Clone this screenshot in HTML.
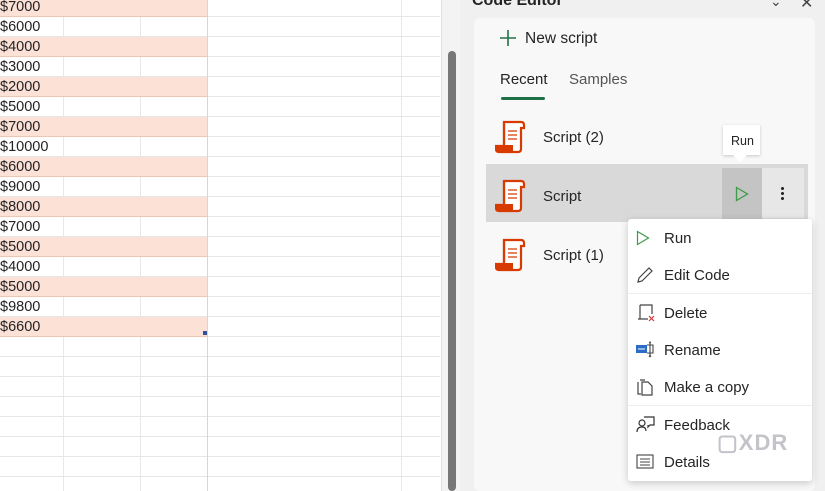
<!DOCTYPE html><html style="overflow:hidden;height:491px"><head><style>
body{margin:0;width:825px;height:491px;overflow:hidden;background:#fff;font-family:"Liberation Sans",sans-serif;position:relative}
.r{position:absolute;left:0;width:440px;height:20px;border-bottom:1px solid #e6e6e6;box-sizing:border-box}
.r span{position:absolute;left:0;top:2px;font-size:14.5px;color:#222;z-index:3}
.pk{position:absolute;left:0;top:0;width:207px;height:19px;background:#fbe1d6;z-index:2;border-bottom:1px solid #ecc7b6}
.v{position:absolute;top:0;height:491px;width:1px;background:#e8e8e8;z-index:1}
.abs{position:absolute}
.t{font-size:15px;color:#242424;position:absolute}
.mi{position:absolute;left:664px;font-size:15px;color:#242424}
</style></head><body>
<div id="grid"></div>
<script>
let g=document.getElementById('grid');let vals=["$7000","$6000","$4000","$3000","$2000","$5000","$7000","$10000","$6000","$9000","$8000","$7000","$5000","$4000","$5000","$9800","$6600"];
for(let i=0;i<25;i++){let d=document.createElement('div');d.className='r';d.style.top=(-3+20*i)+'px';if(i<17){d.innerHTML='<span>'+vals[i]+'</span>';if(i%2==0){d.innerHTML+='<div class="pk"></div>';}}g.appendChild(d);}
</script>
<div class="v" style="left:63px"></div><div class="v" style="left:140px"></div><div class="v" style="left:207px;background:#d6d6d6"></div><div class="v" style="left:401px"></div>
<div class="abs" style="left:203px;top:331px;width:4px;height:4px;background:#3050a0;z-index:4"></div>
<div class="abs" style="left:441px;top:0;width:19px;height:491px;background:#f3f3f3;border-left:1px solid #e0e0e0;z-index:5"></div>
<div class="abs" style="left:448px;top:51px;width:8px;height:440px;background:#777;border-radius:4px;z-index:6"></div>
<div class="abs" style="left:460px;top:0;width:365px;height:491px;background:#f0f0f0;z-index:5"></div>
<div style="position:absolute;left:0;top:0;width:825px;height:491px;z-index:7">
<div class="abs" style="left:474px;top:18px;width:341px;height:473px;background:#f8f8f8;border-radius:6px"></div>
<div class="t" style="left:472px;top:-8px;font-size:16px;font-weight:bold">Code Editor</div>
<div class="t" style="left:800px;top:-7px;font-size:16px;color:#444">✕</div>
<div class="t" style="left:770px;top:-7px;font-size:14px;color:#444">⌄</div>
<svg class="abs" style="left:499px;top:29px" width="18" height="18"><path d="M9 1V17M1 9H17" stroke="#217346" stroke-width="1.6"/></svg>
<div class="t" style="left:525px;top:30px;font-size:15.5px">New script</div>
<div class="t" style="left:500px;top:71px;font-size:15px">Recent</div>
<div class="abs" style="left:501px;top:97px;width:44px;height:3px;background:#1e7145;border-radius:2px"></div>
<div class="t" style="left:569px;top:71px;font-size:15px;color:#555">Samples</div>
<div class="abs" style="left:486px;top:164px;width:322px;height:58px;background:#d9d9d9"></div>
<div class="abs" style="left:722px;top:168px;width:40px;height:54px;background:#c4c4c4"></div>
<div class="abs" style="left:762px;top:168px;width:42px;height:50px;background:#e7e7e7"></div>
<svg class="abs" style="left:735px;top:186px" width="14" height="16"><path d="M1.5 1.5L12.5 8L1.5 14.5Z" fill="none" stroke="#3d9b48" stroke-width="1.3"/></svg>
<div class="abs" style="left:781px;top:187px;width:3px;height:3px;background:#222;border-radius:50%;box-shadow:0 5px 0 #222,0 10px 0 #222"></div>
<div class="abs" style="left:723px;top:125px;width:37px;height:30px;background:#fff;box-shadow:0 1px 3px rgba(0,0,0,.2)"></div>
<div class="abs" style="left:735px;top:150px;width:10px;height:10px;background:#fff;transform:rotate(45deg)"></div>
<div class="abs" style="left:723px;top:130px;width:37px;height:20px;background:#fff"></div>
<div class="t" style="left:731px;top:134px;font-size:12.5px">Run</div>
<script>
[[120,'Script (2)'],[179,'Script'],[238,'Script (1)']].forEach(([y,n])=>{document.write('<svg class="abs" style="left:495px;top:'+y+'px" width="32" height="34"><path d="M9 2H26Q29 2 29 5V8H26V29Q26 32 23 32H4Q1 32 1 29V26H9Z" fill="#fff" stroke="#d83b01" stroke-width="2.2"/><path d="M9 2V26" stroke="#d83b01" stroke-width="2.2"/><path d="M1 25H18V32H4Q1 32 1 29Z" fill="#d83b01"/><path d="M13 11H22M13 15H22M13 19H22" stroke="#d83b01" stroke-width="1.3"/></svg><div class="t" style="left:543px;top:'+(y+9)+'px">'+n+'</div>');});
</script>
<div class="abs" style="left:628px;top:219px;width:184px;height:262px;background:#fff;box-shadow:0 2px 8px rgba(0,0,0,.2);border-radius:3px"></div>
<div class="abs" style="left:628px;top:293px;width:184px;height:1px;background:#eee"></div>
<div class="abs" style="left:628px;top:405px;width:184px;height:1px;background:#eee"></div>
<svg class="abs" style="left:636px;top:230px" width="14" height="16"><path d="M1.5 1.5L12.5 8L1.5 14.5Z" fill="none" stroke="#3d9b48" stroke-width="1.2"/></svg>
<div class="mi" style="top:230px">Run</div>
<svg class="abs" style="left:636px;top:266px" width="18" height="18"><path d="M2 16L3 12L13 2L16 5L6 15Z" fill="none" stroke="#444" stroke-width="1.2"/></svg>
<div class="mi" style="top:267px">Edit Code</div>
<svg class="abs" style="left:636px;top:303px" width="20" height="20"><path d="M4 2H16V11M4 2V16H12M2 16H12" fill="none" stroke="#444" stroke-width="1.2"/><path d="M13 13L18 18M18 13L13 18" stroke="#d13438" stroke-width="1.2"/></svg>
<div class="mi" style="top:305px">Delete</div>
<svg class="abs" style="left:635px;top:340px" width="20" height="20"><rect x="1" y="5" width="11" height="8" fill="#2b6cc4"/><path d="M12 5H18V13H12M14 2Q15 2 15 4V14Q15 16 14 17M16 2Q15 2 15 4M16 17Q15 16 15 14" fill="none" stroke="#444" stroke-width="1.1"/><path d="M3 9H10" stroke="#fff"/></svg>
<div class="mi" style="top:342px">Rename</div>
<svg class="abs" style="left:636px;top:377px" width="20" height="20"><path d="M4 3H9M2 5V17H5" fill="none" stroke="#444" stroke-width="1.2"/><path d="M6 5H12L16 9V18H6Z" fill="none" stroke="#444" stroke-width="1.2"/></svg>
<div class="mi" style="top:379px">Make a copy</div>
<svg class="abs" style="left:636px;top:415px" width="20" height="20"><circle cx="6" cy="8" r="3" fill="none" stroke="#333" stroke-width="1.2"/><path d="M1 17Q1 12 6 12Q10 12 10 16M8 2H18V10H14L12 12V10" fill="none" stroke="#333" stroke-width="1.2"/></svg>
<div class="mi" style="top:417px">Feedback</div>
<svg class="abs" style="left:636px;top:453px" width="20" height="18"><rect x="1" y="2" width="16" height="13" fill="none" stroke="#444" stroke-width="1.1"/><path d="M4 6H14M4 9H14M4 12H14" stroke="#444"/></svg>
<div class="mi" style="top:454px">Details</div>
<div class="abs" style="left:717px;top:430px;font-size:22px;color:rgba(170,170,180,.7);font-weight:bold;letter-spacing:1px">▢XDR</div>
</div>
</body></html>
